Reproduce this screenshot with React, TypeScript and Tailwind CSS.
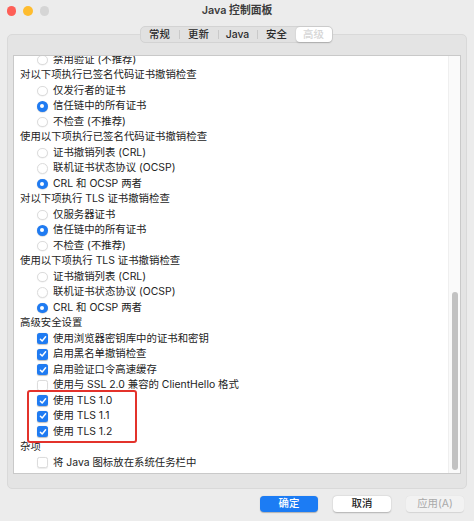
import React from "react";

type Row = { t: "h" | "r" | "c"; label: string; on?: boolean };

const rows: Row[] = [
  { t: "r", label: "禁用验证 (不推荐)" },
  { t: "h", label: "对以下项执行已签名代码证书撤销检查" },
  { t: "r", label: "仅发行者的证书" },
  { t: "r", label: "信任链中的所有证书", on: true },
  { t: "r", label: "不检查 (不推荐)" },
  { t: "h", label: "使用以下项执行已签名代码证书撤销检查" },
  { t: "r", label: "证书撤销列表 (CRL)" },
  { t: "r", label: "联机证书状态协议 (OCSP)" },
  { t: "r", label: "CRL 和 OCSP 两者", on: true },
  { t: "h", label: "对以下项执行 TLS 证书撤销检查" },
  { t: "r", label: "仅服务器证书" },
  { t: "r", label: "信任链中的所有证书", on: true },
  { t: "r", label: "不检查 (不推荐)" },
  { t: "h", label: "使用以下项执行 TLS 证书撤销检查" },
  { t: "r", label: "证书撤销列表 (CRL)" },
  { t: "r", label: "联机证书状态协议 (OCSP)" },
  { t: "r", label: "CRL 和 OCSP 两者", on: true },
  { t: "h", label: "高级安全设置" },
  { t: "c", label: "使用浏览器密钥库中的证书和密钥", on: true },
  { t: "c", label: "启用黑名单撤销检查", on: true },
  { t: "c", label: "启用验证口令高速缓存", on: true },
  { t: "c", label: "使用与 SSL 2.0 兼容的 ClientHello 格式" },
  { t: "c", label: "使用 TLS 1.0", on: true },
  { t: "c", label: "使用 TLS 1.1", on: true },
  { t: "c", label: "使用 TLS 1.2", on: true },
  { t: "h", label: "杂项" },
  { t: "c", label: "将 Java 图标放在系统任务栏中" },
];

function Radio({ on }: { on?: boolean }) {
  if (on)
    return (
      <span className="flex h-[10.5px] w-[10.5px] items-center justify-center rounded-full bg-[#1f7bf2] shadow-[0_0.5px_1px_rgba(0,0,0,0.25)]">
        <span className="h-[4px] w-[4px] rounded-full bg-white" />
      </span>
    );
  return (
    <span className="h-[10.5px] w-[10.5px] rounded-full border border-[#dcdcdc] bg-white shadow-[0_0.5px_1px_rgba(0,0,0,0.08)]" />
  );
}

function Check({ on }: { on?: boolean }) {
  if (on)
    return (
      <span className="flex h-[11px] w-[11px] items-center justify-center rounded-[2.5px] bg-[#1f7bf2] shadow-[0_0.5px_1px_rgba(0,0,0,0.25)]">
        <svg width="8" height="8" viewBox="0 0 8 8" fill="none">
          <path d="M1.4 4.2 L3.2 6 L6.6 1.8" stroke="white" strokeWidth="1.5" strokeLinecap="round" strokeLinejoin="round" />
        </svg>
      </span>
    );
  return (
    <span className="h-[11px] w-[11px] rounded-[2.5px] border border-[#dcdcdc] bg-white shadow-[0_0.5px_1px_rgba(0,0,0,0.08)]" />
  );
}

const tabs = ["常规", "更新", "Java", "安全"];

export default function App() {
  return (
    <div
      className="relative h-[521px] w-[474px] overflow-hidden bg-[#ececec] text-[#232323]"
      style={{ fontFamily: 'Inter, "Noto Sans CJK SC", sans-serif' }}
    >
      {/* title bar */}
      <div className="relative flex h-[22px] items-center">
        <div className="flex items-center gap-[7px] pl-[6.5px]">
          <span className="h-[9.5px] w-[9.5px] rounded-full bg-[#fe5f57]" />
          <span className="h-[9.5px] w-[9.5px] rounded-full bg-[#febc2e]" />
          <span className="h-[9.5px] w-[9.5px] rounded-full bg-[#d5d5d5]" />
        </div>
        <div className="absolute inset-x-0 top-0 flex h-[22px] items-center justify-center text-[10.8px] font-semibold text-[#3c3c3c]">
          Java 控制面板
        </div>
      </div>

      {/* tabs */}
      <div className="relative z-10 mt-[4px] flex justify-center pr-[2px]">
        <div className="flex h-[17px] rounded-[5px] border border-[#d3d3d3] bg-[#e1e1e1] text-[10.4px] font-medium">
          {tabs.map((t, i) => (
            <div key={t} className="flex items-center">
              {i > 0 && <span className="h-[9px] w-px bg-[#c9c9c9]" />}
              <span className="flex h-full w-[38px] items-center justify-center text-[#2a2a2a]">{t}</span>
            </div>
          ))}
          <span className="flex h-[15px] w-[36px] items-center justify-center rounded-[4px] bg-white text-[#d6d6d6] shadow-[0_0.5px_1.5px_rgba(0,0,0,0.2)]">
            高级
          </span>
        </div>
      </div>

      {/* pane */}
      <div className="mx-[7px] -mt-[9px] h-[455px] rounded-[5px] border border-[#d9d9d9] bg-[#e4e4e4] px-[5px] pt-[20px]">
        <div className="relative flex h-[419px] overflow-hidden border border-[#c9c9c9] bg-white">
          <div className="relative -mt-[4px] flex-1 pl-[6px]">
            {rows.map((r, i) => (
              <div key={i} className="flex h-[15.5px] items-center text-[10.4px]">
                {r.t === "h" ? (
                  <span>{r.label}</span>
                ) : (
                  <>
                    <span className="ml-[17px] flex w-[16px] items-center">
                      {r.t === "r" ? <Radio on={r.on} /> : <Check on={r.on} />}
                    </span>
                    <span>{r.label}</span>
                  </>
                )}
              </div>
            ))}
            <div className="absolute left-[13px] top-[338px] h-[53px] w-[110px] rounded-[3px] border-2 border-[#e3322b]" />
          </div>
          {/* scrollbar */}
          <div className="relative w-[12px] border-l border-[#efefef] bg-[#fafafa]">
            <div className="absolute left-[2.5px] top-[236px] h-[178px] w-[6.5px] rounded-full bg-[#c2c2c2]" />
          </div>
        </div>
      </div>

      {/* buttons */}
      <div className="mt-[7px] flex justify-end gap-[15px] pr-[10px] text-[10.4px] font-medium">
        <button className="flex h-[15.5px] w-[58px] items-center justify-center rounded-[4px] bg-[#1c7cf4] text-white shadow-[0_0.5px_1px_rgba(0,0,0,0.25)]">
          确定
        </button>
        <button className="flex h-[15.5px] w-[58px] items-center justify-center rounded-[4px] bg-white text-[#222] shadow-[0_0.5px_1.5px_rgba(0,0,0,0.25)]">
          取消
        </button>
        <button className="flex h-[15.5px] w-[58px] items-center justify-center rounded-[4px] bg-[#f2f2f2] font-normal text-[#a9a9a9] shadow-[0_0.5px_1px_rgba(0,0,0,0.1)]">
          应用(A)
        </button>
      </div>
    </div>
  );
}
